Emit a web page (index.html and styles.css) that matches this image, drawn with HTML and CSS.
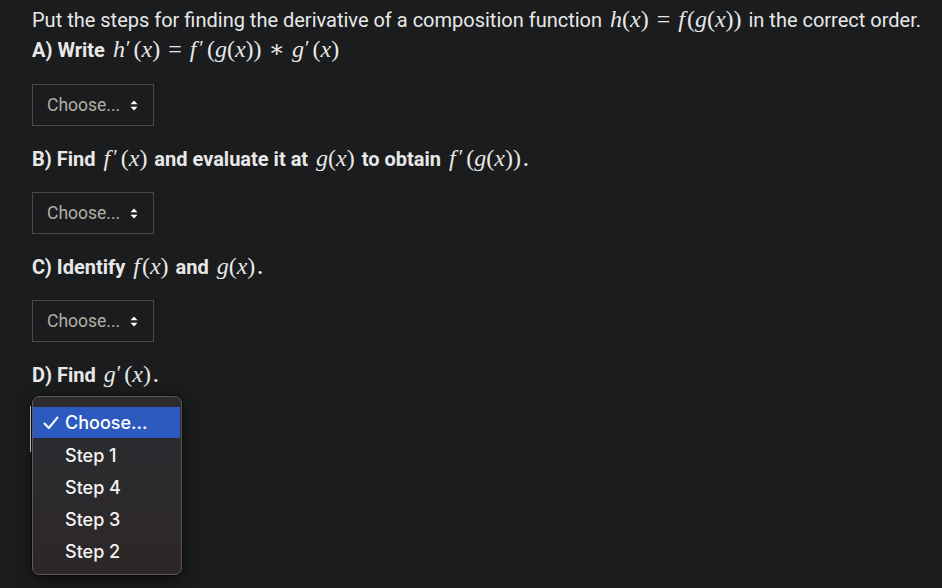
FILE: index.html
```html
<!DOCTYPE html>
<html>
<head>
<meta charset="utf-8">
<link rel="stylesheet" href="styles.css">
</head>
<body>
<div class="page">
  <p class="line title">Put the steps for finding the derivative of a composition function <span class="m"><i>h</i>(<i>x</i>)<span class="rel">=</span><i class="f">f</i>(<i>g</i>(<i>x</i>))</span> in the correct order.</p>
  <p class="line label">A) Write <span class="m"><i>h</i><span class="pr">′</span>(<i>x</i>)<span class="rel">=</span><i class="f">f</i><span class="pr">′</span>(<i>g</i>(<i>x</i>))<span class="bin">∗</span><i>g</i><span class="pr">′</span>(<i>x</i>)</span></p>
  <div class="select first">Choose...<svg class="arrows" width="8" height="11" viewBox="0 0 8 11"><path d="M4 0.5 L7.5 4.3 H0.5 Z M4 10.5 L7.5 6.7 H0.5 Z" fill="#ffffff"/></svg></div>

  <p class="line label">B) Find <span class="m"><i class="f">f</i><span class="pr">′</span>(<i>x</i>)</span> and evaluate it at <span class="m"><i>g</i>(<i>x</i>)</span> to obtain <span class="m"><i class="f">f</i><span class="pr">′</span>(<i>g</i>(<i>x</i>))</span>.</p>
  <div class="select">Choose...<svg class="arrows" width="8" height="11" viewBox="0 0 8 11"><path d="M4 0.5 L7.5 4.3 H0.5 Z M4 10.5 L7.5 6.7 H0.5 Z" fill="#ffffff"/></svg></div>

  <p class="line label">C) Identify <span class="m"><i class="f">f</i>(<i>x</i>)</span> and <span class="m"><i>g</i>(<i>x</i>)</span>.</p>
  <div class="select">Choose...<svg class="arrows" width="8" height="11" viewBox="0 0 8 11"><path d="M4 0.5 L7.5 4.3 H0.5 Z M4 10.5 L7.5 6.7 H0.5 Z" fill="#ffffff"/></svg></div>

  <p class="line label">D) Find <span class="m"><i>g</i><span class="pr">′</span>(<i>x</i>)</span>.</p>
  <div class="select-wrap">
    <div class="select focused"><span class="covered">Choose...</span><svg class="arrows" width="8" height="11" viewBox="0 0 8 11"><path d="M4 0.5 L7.5 4.3 H0.5 Z M4 10.5 L7.5 6.7 H0.5 Z" fill="#ffffff"/></svg></div>
    <div class="menu">
      <div class="opt active"><svg class="check" width="16" height="14" viewBox="0 0 16 14"><path d="M1.5 7.5 L5.8 12 L14.5 1.5" fill="none" stroke="#ffffff" stroke-width="2" stroke-linecap="round" stroke-linejoin="round"/></svg>Choose...</div>
      <div class="opt">Step 1</div>
      <div class="opt">Step 4</div>
      <div class="opt">Step 3</div>
      <div class="opt">Step 2</div>
    </div>
  </div>
</div>
</body>
</html>
```

FILE: styles.css
```css
html, body {
  margin: 0;
  padding: 0;
  background: #1b1c1e;
}
.page {
  box-sizing: border-box;
  min-height: 588px;
  padding: 5px 32px 0 32px;
  font-family: Roboto, "Liberation Sans", sans-serif;
  color: #e8e8e8;
}
.line {
  margin: 0;
  font-size: 20px;
  line-height: 30px;
  height: 30px;
  white-space: nowrap;
}
.title {
  font-weight: 400;
}
.label {
  font-weight: 700;
}
.m {
  font-family: "Liberation Serif", "DejaVu Serif", serif;
  font-weight: 400;
  font-size: 24px;
  line-height: 20px;
  letter-spacing: 0;
  padding: 0 2px 0 3px;
}
.m i {
  font-style: italic;
}
.m i.f {
  margin-right: 2px;
}
.m .rel {
  margin: 0 8px;
}
.m .bin {
  margin: 0 7px;
}
.m .pr {
  font-size: 21px;
  margin: 0 3px 0 1px;
  position: relative;
  top: -2px;
}
.select {
  box-sizing: border-box;
  width: 122px;
  height: 42px;
  margin: 18px 0;
  border: 1px solid #48494b;
  display: flex;
  align-items: center;
  padding-left: 14px;
  font-family: Roboto, "Liberation Sans", sans-serif;
  font-size: 17.5px;
  color: #b3aea8;
}
.select.first {
  margin-top: 19px;
}
.arrows {
  margin-left: 10px;
}
.select-wrap {
  position: relative;
}
.select.focused {
  outline: 1px solid #e6e6e6;
  outline-offset: 1px;
}
.covered {
  visibility: hidden;
}
.menu {
  position: absolute;
  left: 0;
  top: -12px;
  width: 150px;
  height: 179px;
  box-sizing: border-box;
  border: 1px solid #5b5b5d;
  border-radius: 7px;
  background: linear-gradient(180deg, #2c2c30 0%, #2b2a2d 50%, #2e2627 100%);
  box-shadow: 0 0 0 1px #0c0c0c, 0 6px 16px rgba(0,0,0,0.5);
  padding-top: 10px;
  font-family: Inter, "Liberation Sans", sans-serif;
  font-size: 18px;
  font-weight: 500;
  color: #f4f4f4;
}
.opt {
  height: 32px;
  display: flex;
  align-items: center;
  padding-left: 32px;
  position: relative;
}
.opt.active {
  background: #2c5abf;
  height: 31px;
  margin: 0 1px 1px 0;
  color: #ffffff;
}
.check {
  position: absolute;
  left: 10px;
  top: 9px;
}
```
